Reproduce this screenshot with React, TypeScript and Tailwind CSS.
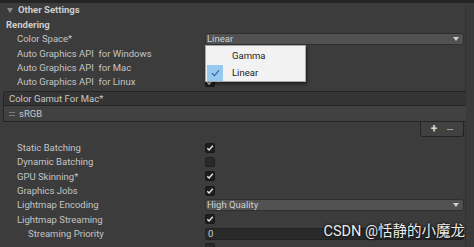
import React from 'react';

const font = { fontFamily: 'Roboto, "Noto Sans", "Noto Sans CJK SC", sans-serif' };

function Check() {
    return (
        <div className="w-[10px] h-[10px] rounded-[2px] bg-[#1e1e1e] border border-[#171717] flex items-center justify-center">
            <svg width="8" height="8" viewBox="0 0 8 8">
                <path d="M1.3 4.2 L3.1 6 L6.8 1.8" stroke="#e6e6e6" strokeWidth="1.4" fill="none" />
            </svg>
        </div>
    );
}

function Empty() {
    return <div className="w-[10px] h-[10px] rounded-[2px] bg-[#2a2a2a] border border-[#202020]" />;
}

function Dropdown({ value }: { value: string }) {
    return (
        <div className="h-[12px] w-full flex items-center justify-between rounded-[3px] bg-[#515151] border border-[#2f2f2f] pl-[1px] pr-[4px]">
            <span className="text-[9.5px] leading-none text-[#d0d0d0]">{value}</span>
            <svg width="6" height="4" viewBox="0 0 6 4">
                <path d="M0 0 H6 L3 4 Z" fill="#cfcfcf" />
            </svg>
        </div>
    );
}

function Row({ label, indent = 17, children }: { label: string; indent?: number; children?: React.ReactNode }) {
    return (
        <div className="h-[14.4px] flex items-center">
            <div className="w-[205px] shrink-0 text-[9.5px] leading-none text-[#c4c4c4] whitespace-pre" style={{ paddingLeft: indent }}>
                {label}
            </div>
            <div className="flex-1 flex items-center pr-[1px]">{children}</div>
        </div>
    );
}

export default function App() {
    return (
        <div className="relative w-[474px] h-[247px] overflow-hidden bg-[#3c3c3c]" style={font}>
            <div className="h-[3px] bg-[#242424]" />
            <div className="flex">
                <div className="w-[466px] border-r border-[#333]">
                    {/* Other Settings */}
                    <div className="h-[14.4px] flex items-center pl-[7px] gap-[5px]">
                        <svg width="6" height="5" viewBox="0 0 6 5">
                            <path d="M0 0 H6 L3 5 Z" fill="#8a8a8a" />
                        </svg>
                        <span className="text-[9.5px] leading-none font-bold text-[#cdcdcd]">Other Settings</span>
                    </div>
                    <div className="h-[14.4px] flex items-center pl-[6px]">
                        <span className="text-[9.5px] leading-none font-bold text-[#cdcdcd]">Rendering</span>
                    </div>
                    <Row label="Color Space*">
                        <Dropdown value="Linear" />
                    </Row>
                    <Row label="Auto Graphics API  for Windows" />
                    <Row label="Auto Graphics API  for Mac" />
                    <Row label="Auto Graphics API  for Linux">
                        <Check />
                    </Row>

                    {/* Color Gamut list */}
                    <div className="ml-[3px] mr-[-2px] mt-[2px]">
                        <div className="h-[15px] flex items-center pl-[5px] bg-[#343434] border border-[#242424] rounded-t-[3px]">
                            <span className="text-[9.5px] leading-none text-[#c8c8c8]">Color Gamut For Mac*</span>
                        </div>
                        <div className="h-[16px] flex items-center pl-[5px] gap-[4px] bg-[#414141] border-x border-b border-[#242424]">
                            <div className="flex flex-col gap-[2px]">
                                <div className="w-[6px] h-px bg-[#7a7a7a]" />
                                <div className="w-[6px] h-px bg-[#7a7a7a]" />
                            </div>
                            <span className="text-[9.5px] leading-none text-[#c8c8c8]">sRGB</span>
                        </div>
                        <div className="flex justify-end pr-[3px]">
                            <div className="w-[44px] h-[15px] flex items-center justify-center gap-[10px] bg-[#414141] border-x border-b border-[#242424] rounded-b-[3px]">
                                <span className="text-[12px] leading-none font-bold text-[#d6d6d6]">+</span>
                                <div className="w-[6px] h-px bg-[#a0a0a0]" />
                            </div>
                        </div>
                    </div>

                    <div className="h-[3px]" />
                    <Row label="Static Batching">
                        <Check />
                    </Row>
                    <Row label="Dynamic Batching">
                        <Empty />
                    </Row>
                    <Row label="GPU Skinning*">
                        <Check />
                    </Row>
                    <Row label="Graphics Jobs">
                        <Check />
                    </Row>
                    <Row label="Lightmap Encoding">
                        <Dropdown value="High Quality" />
                    </Row>
                    <Row label="Lightmap Streaming">
                        <Check />
                    </Row>
                    <Row label="Streaming Priority" indent={28}>
                        <div className="h-[12px] w-full flex items-center rounded-[2px] bg-[#2a2a2a] border border-[#212121] pl-[2px]">
                            <span className="text-[9.5px] leading-none text-[#cfcfcf]">0</span>
                        </div>
                    </Row>
                    <Row label="">
                        <Empty />
                    </Row>
                </div>
                <div className="flex-1 bg-[#3a3a3a]" />
            </div>

            {/* Popup menu */}
            <div className="absolute left-[205px] top-[45px] w-[101px] h-[37px] bg-[#f2f2f2] border border-[#a8a8a8] shadow-[1px_2px_3px_rgba(0,0,0,0.5)] py-[1px] pl-[1px]">
                <div className="h-[17px] flex items-center">
                    <div className="w-[16px] h-[16px]" />
                    <span className="ml-[9px] text-[9.5px] leading-none text-[#1b1b1b]">Gamma</span>
                </div>
                <div className="h-[17px] flex items-center">
                    <div className="w-[16px] h-[16px] bg-[#99c8ef] flex items-center justify-center">
                        <svg width="9" height="8" viewBox="0 0 9 8">
                            <path d="M1 4.2 L3.5 6.6 L8 1.4" stroke="#2f6ea8" strokeWidth="1.3" fill="none" />
                        </svg>
                    </div>
                    <span className="ml-[9px] text-[9.5px] leading-none text-[#1b1b1b]">Linear</span>
                </div>
            </div>

            {/* Watermark */}
            <div className="absolute right-[9px] top-[225px] text-[14.5px] leading-none text-[#ececec] [text-shadow:0_0_3px_#111,0_0_2px_#111]">
                CSDN @恬静的小魔龙
            </div>
        </div>
    );
}
